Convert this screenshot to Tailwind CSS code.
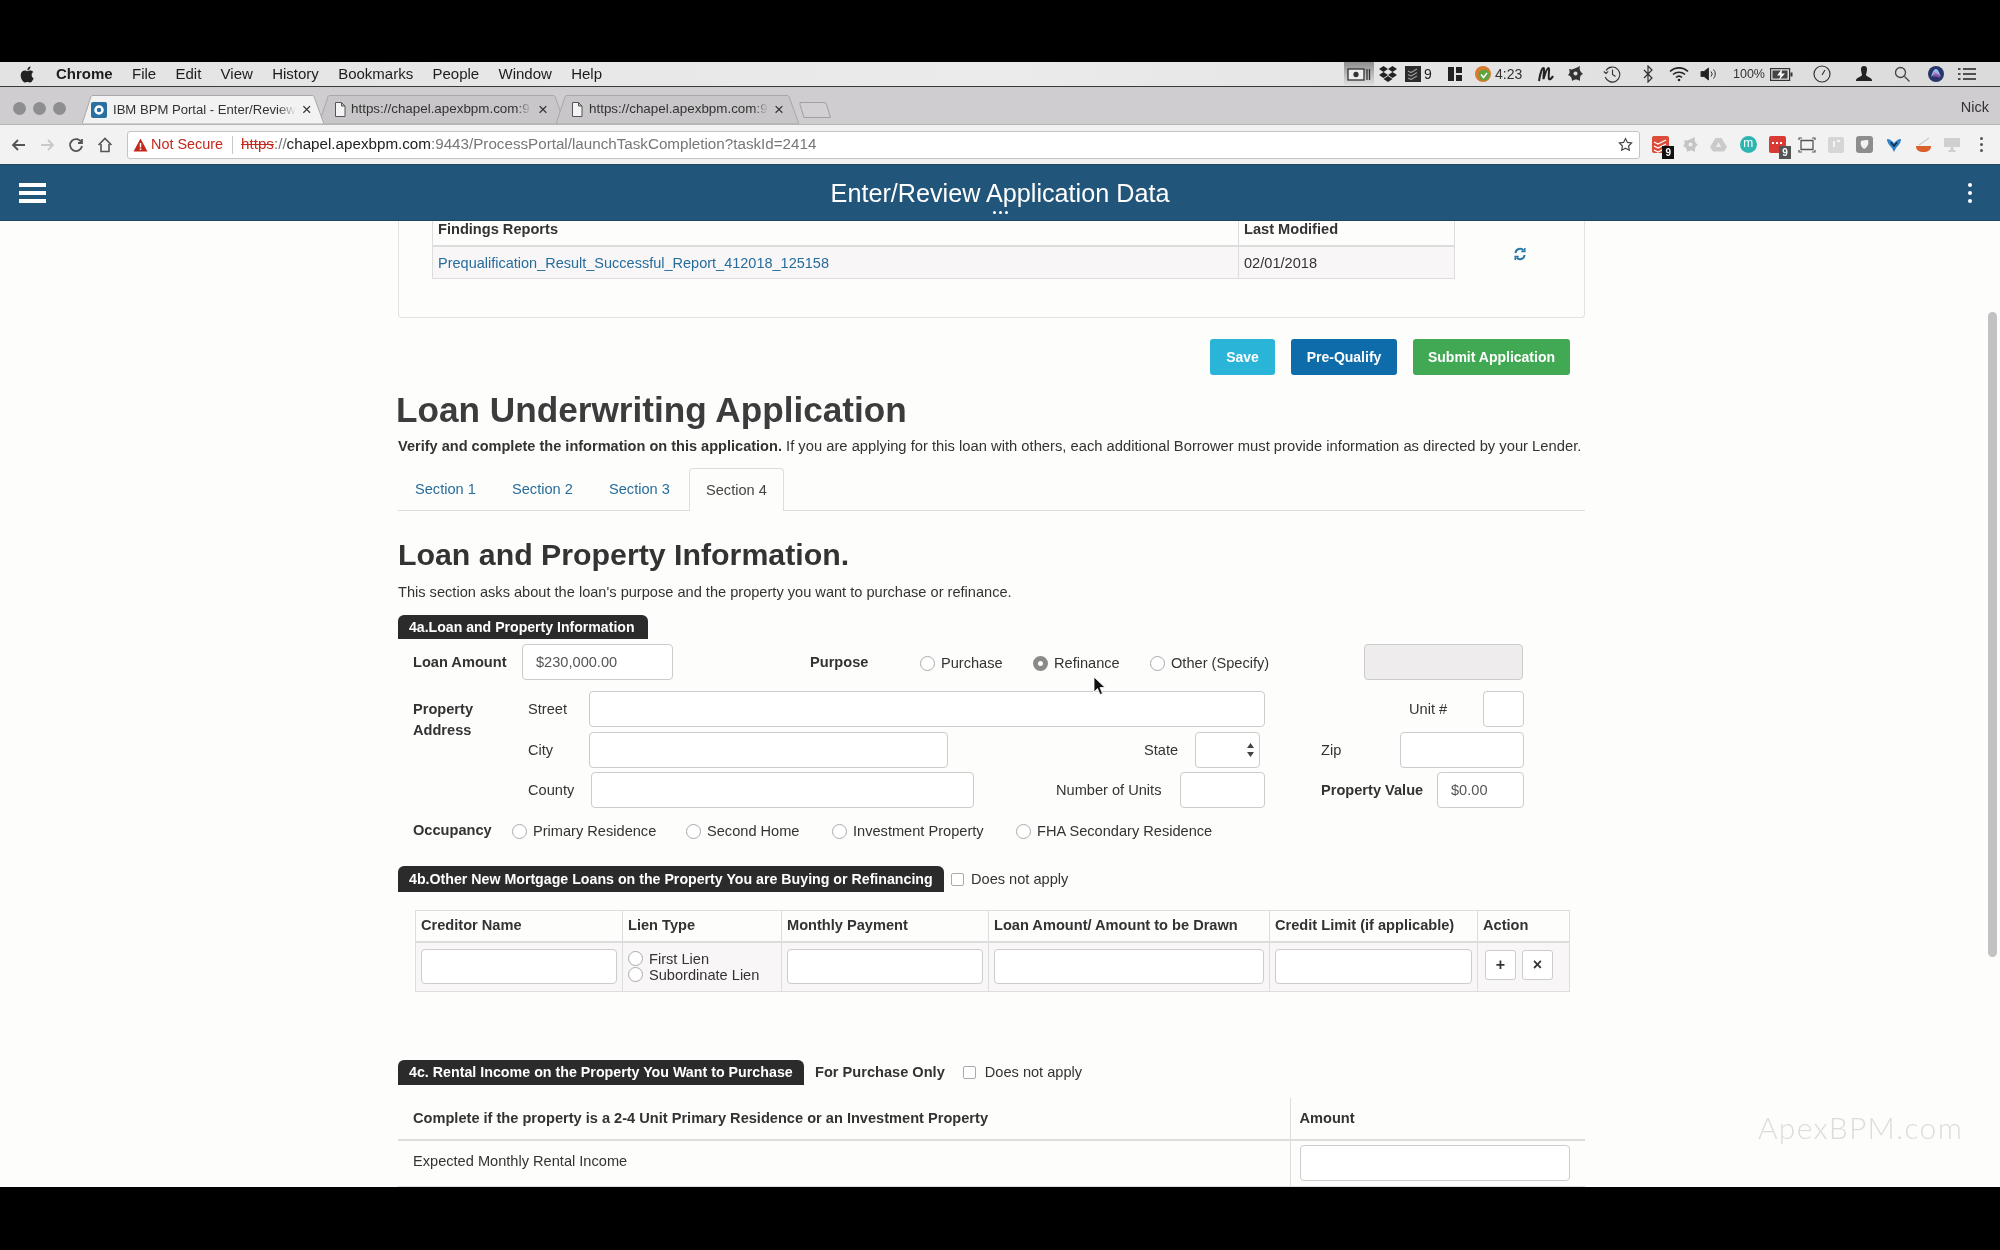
<!DOCTYPE html>
<html lang="en">
<head>
    <meta charset="UTF-8">
    <title>IBM BPM Portal - Enter/Review Application Data</title>
    <script src="https://cdn.jsdelivr.net/npm/@tailwindcss/browser@4"></script>
</head>
<body class="bg-black">
<div class="w-[2000px] h-[1250px] overflow-hidden bg-black flex flex-col font-['Liberation_Sans',sans-serif] text-[14.6px] text-[#333] blur-[0.5px]">
    <div class="h-[62px] shrink-0"></div>

    <!-- macOS menu bar -->
    <div class="h-[25px] shrink-0 flex items-center pl-[20px] pr-[24px] bg-gradient-to-r from-[#e4e3e3] via-[#ecebeb] to-[#dcdbdb] border-b border-[#3a3a3a] text-[#1c1c1c] text-[15px]">
        <svg class="w-[14px] h-[17px] mr-[22px]" viewBox="0 0 14 17" fill="#222"><path d="M11.6 9c0-2 1.6-2.9 1.7-3-1-1.3-2.4-1.500-2.900-1.500-1.200-.1-2.400.7-3 .7-.6 0-1.600-.7-2.600-.7C3.400 4.500 2.100 5.300 1.400 6.500c-1.400 2.400-.4 6 1 8 .7 1 1.500 2.100 2.500 2 1-.1 1.400-.6 2.600-.6s1.500.6 2.600.6c1.100 0 1.800-1 2.400-2 .8-1.100 1.100-2.200 1.100-2.300-.1 0-2-.8-2-3.200zM9.700 3.100c.5-.7.900-1.600.8-2.500-.8 0-1.700.5-2.300 1.200-.5.6-.9 1.500-.8 2.400.9.100 1.800-.4 2.300-1.100z"/></svg>
        <div class="flex gap-[19.300px]">
            <span class="font-bold">Chrome</span>
            <span>File</span><span>Edit</span><span>View</span><span>History</span><span>Bookmarks</span><span>People</span><span>Window</span><span>Help</span>
        </div>
        <!-- status icons -->
        <div class="ml-auto flex items-center h-full text-[14px]">
            <div class="w-[30px] h-full bg-gradient-to-b from-[#8f8f8f] to-[#e4e3e3] flex items-center justify-center">
                <svg class="w-[24px] h-[15px]" viewBox="0 0 24 15" fill="none" stroke="#333" stroke-width="1.300"><rect x="1" y="2" width="16" height="11" fill="#eee"/><circle cx="9" cy="7.500" r="2" fill="#333"/><path d="M20 2v11M22.500 2v11"/></svg>
            </div>
            <svg class="ml-[4px] w-[20px] h-[18px]" viewBox="0 0 20 18" fill="#222"><path d="m5.500 1 4.500 3-4.500 3L1 4zM14.500 1 19 4l-4.500 3L10 4zM5.500 7l4.500 3-4.500 3L1 10zM14.500 7l4.500 3-4.500 3L10 10zM10 11l4.500 3-4.500 3-4.500-3z"/></svg>
            <svg class="ml-[6px] w-[18px] h-[18px]" viewBox="0 0 18 18"><rect x="1" y="1" width="16" height="16" fill="#2b2b2b"/><path d="m4 6 3 1.500L13 4M4 9.500l3 1.500 6-3.500M4 13l3 1.500 6-3.500" stroke="#999" fill="none" stroke-width="1.200"/></svg>
            <span class="ml-[2px] w-[11px]">9</span>
            <svg class="ml-[11px] w-[18px] h-[16px]" viewBox="0 0 18 16" fill="#222"><rect x="2" y="1" width="6" height="14"/><rect x="10" y="1" width="6" height="6"/><rect x="10" y="9" width="6" height="6"/></svg>
            <svg class="ml-[10px] w-[18px] h-[18px]" viewBox="0 0 18 18"><circle cx="9" cy="9" r="8" fill="#d9782e"/><circle cx="10" cy="10" r="5.500" fill="#5aa63c"/><path d="m7 9.500 2.500 3L13 8" stroke="#fff" fill="none" stroke-width="1.600"/></svg>
            <span class="ml-[3px] w-[30px] text-[#333]">4:23</span>
            <svg class="ml-[12px] w-[18px] h-[18px]" viewBox="0 0 18 18" fill="none" stroke="#222" stroke-width="2"><path d="M2 16C3 9 5 3 6.500 3S6 11 6.500 14C8 9 10 3 11.500 3S11 11 12 14c1 1 3-1 4-3"/></svg>
            <svg class="ml-[11px] w-[18px] h-[18px]" viewBox="0 0 18 18"><path d="M3 4c3 1 5 0 11-3-1 3 0 6 3 8-3 1-3 3-3 7-3-2-5-2-8 0 0-3-1-5-4-6 2-2 2-3 1-6z" fill="#333"/><circle cx="9.500" cy="8.500" r="2" fill="#ddd"/></svg>
            <svg class="ml-[19px] w-[18px] h-[18px]" viewBox="0 0 18 18" fill="none" stroke="#333" stroke-width="1.100"><path d="M3 5.500A7.500 7.500 0 1 1 2.200 12M9.500 4.500V9.500l3 2M.8 6.500 3 8.500l2.200-2.200"/></svg>
            <svg class="ml-[21px] w-[12px] h-[18px]" viewBox="0 0 12 18" fill="none" stroke="#333" stroke-width="1.200"><path d="m2 5 8 8-4 4V1l4 4-8 8"/></svg>
            <svg class="ml-[15px] w-[20px] h-[16px]" viewBox="0 0 20 16" fill="none" stroke="#222" stroke-width="1.600"><path d="M1 5.500a13 13 0 0 1 18 0M4 8.500a9 9 0 0 1 12 0M7 11.500a4.500 4.500 0 0 1 6 0"/><circle cx="10" cy="14" r="1.300" fill="#222" stroke="none"/></svg>
            <svg class="ml-[11px] w-[18px] h-[14px]" viewBox="0 0 18 14" fill="none" stroke="#333"><path d="M1 4.500h3L8.500 1v12L4 9.500H1z" fill="#222"/><path d="M11 4.500a3.500 3.500 0 0 1 0 5M13.500 2.500a6.500 6.500 0 0 1 0 9"/></svg>
            <span class="ml-[15px] w-[31px] text-[12.500px] text-[#333] whitespace-nowrap">100%</span>
            <svg class="ml-[6px] w-[23px] h-[13px]" viewBox="0 0 23 13"><rect x=".6" y=".6" width="19" height="11.800" fill="#ddd" stroke="#333" stroke-width="1.200"/><rect x="2.500" y="2.500" width="15" height="8" fill="#444"/><path d="M12 1 7 7.500h3.500L9 12l6-6.500h-3.500z" fill="#fff"/><rect x="20.500" y="4.500" width="2" height="4" fill="#333"/></svg>
            <svg class="ml-[20px] w-[18px] h-[18px]" viewBox="0 0 18 18" fill="none" stroke="#333" stroke-width="1.200"><circle cx="9" cy="9" r="8"/><path d="M9 10 12 5"/></svg>
            <svg class="ml-[24px] w-[18px] h-[18px]" viewBox="0 0 18 18" fill="#222"><path d="M6 4a3 3 0 0 1 6 0c0 3-1 5-1 6 1 2 5 2 6 5v1H1v-1c1-3 5-3 6-5 0-1-1-3-1-6z"/></svg>
            <svg class="ml-[21px] w-[16px] h-[16px]" viewBox="0 0 16 16" fill="none" stroke="#444" stroke-width="1.300"><circle cx="6.500" cy="6.500" r="5"/><path d="m10.500 10.500 5 5"/></svg>
            <svg class="ml-[18px] w-[16px] h-[16px]" viewBox="0 0 16 16"><circle cx="8" cy="8" r="8" fill="#27356b"/><path d="M3 11c2-6 3-8 5-8s3 3 5 8c-2-2-3-3-5-3s-3 1-5 3z" fill="#8fc0ea"/><path d="M6 6c3 0 5 2 6 6-2-1-5-2-7-1z" fill="#c060c0" opacity=".7"/></svg>
            <svg class="ml-[14px] w-[18px] h-[14px]" viewBox="0 0 18 14" fill="none" stroke="#222" stroke-width="1.600"><path d="M5 2h13M5 7h13M5 12h13M0 2h2.500M0 7h2.500M0 12h2.500"/></svg>
        </div>
    </div>

    <!-- tab strip -->
    <div class="h-[37px] shrink-0 bg-[#cfcdcf] flex items-end">
        <div class="flex gap-[7px] self-center mt-[5px] pl-[13px] pr-[16px]">
            <span class="w-[13px] h-[13px] rounded-full bg-[#8e8e90]"></span>
            <span class="w-[13px] h-[13px] rounded-full bg-[#8e8e90]"></span>
            <span class="w-[13px] h-[13px] rounded-full bg-[#8e8e90]"></span>
        </div>
        <div class="relative z-10 w-[242px] h-[29px] flex items-center pl-[9px] pr-[14px] gap-[6px] text-[13.100px]">
            <svg class="absolute inset-0 w-full h-full" viewBox="0 0 242 29" preserveAspectRatio="none"><path d="M0 29 9 1.500q.5-1 2-1h219q1.500 0 2 1l10 27.500z" fill="#f2f2f2" stroke="#a8a8a8"/></svg>
            <svg class="relative w-[16px] h-[16px] shrink-0" viewBox="0 0 16 16"><rect width="16" height="16" rx="2" fill="#2a6f9f"/><circle cx="8" cy="8" r="3.500" fill="none" stroke="#fff" stroke-width="2.500"/></svg>
            <span class="relative w-[184px] whitespace-nowrap [mask-image:linear-gradient(to_right,black_90%,transparent)]">IBM BPM Portal - Enter/Review</span>
            <span class="relative ml-auto text-[17px] leading-none">×</span>
        </div>
        <div class="relative -ml-[5px] w-[246px] h-[29px] flex items-center pl-[15px] pr-[17px] gap-[5px] text-[13.400px]">
            <svg class="absolute inset-0 w-full h-full" viewBox="0 0 246 29" preserveAspectRatio="none"><path d="M0 29 9 1.500q.5-1 2-1h223q1.500 0 2 1l10 27.500z" fill="#c8c6c8" stroke="#a8a8a8"/></svg>
            <svg class="relative w-[12px] h-[15px] shrink-0" viewBox="0 0 12 15" fill="#f4f4f4" stroke="#555"><path d="M1.500.5h6l3.500 3.500v10.500h-9.500zM7.500.5v3.500h3.500"/></svg>
            <span class="relative w-[180px] whitespace-nowrap [mask-image:linear-gradient(to_right,black_92%,transparent)]">https://chapel.apexbpm.com:9</span>
            <span class="relative ml-auto text-[17px] leading-none">×</span>
        </div>
        <div class="relative -ml-[9px] w-[243px] h-[29px] flex items-center pl-[15px] pr-[15px] gap-[6px] text-[13.400px]">
            <svg class="absolute inset-0 w-full h-full" viewBox="0 0 243 29" preserveAspectRatio="none"><path d="M0 29 9 1.500q.5-1 2-1h220q1.500 0 2 1l10 27.500z" fill="#c8c6c8" stroke="#a8a8a8"/></svg>
            <svg class="relative w-[12px] h-[15px] shrink-0" viewBox="0 0 12 15" fill="#f4f4f4" stroke="#555"><path d="M1.500.5h6l3.500 3.500v10.500h-9.500zM7.500.5v3.500h3.500"/></svg>
            <span class="relative w-[180px] whitespace-nowrap [mask-image:linear-gradient(to_right,black_92%,transparent)]">https://chapel.apexbpm.com:9</span>
            <span class="relative ml-auto text-[17px] leading-none">×</span>
        </div>
        <svg class="w-[32px] h-[16px] mb-[6px]" viewBox="0 0 32 16"><path d="M1 .5h24q2 0 2.500 2l4 13H5l-4-13z" fill="#d2d0d2" stroke="#a0a0a0"/></svg>
        <span class="ml-auto self-center mt-[4px] pr-[11px] text-[14.500px]">Nick</span>
    </div>

    <!-- toolbar -->
    <div class="h-[40px] shrink-0 bg-[#f2f2f2] flex items-center pl-[10px] border-t border-[#b5b5b5]">
        <svg class="w-[18px] h-[18px]" viewBox="0 0 18 18" fill="none" stroke="#555" stroke-width="1.800"><path d="M15 9H3M8 4 3 9l5 5"/></svg>
        <svg class="w-[18px] h-[18px] ml-[10px]" viewBox="0 0 18 18" fill="none" stroke="#c8c8c8" stroke-width="1.800"><path d="M3 9h12M10 4l5 5-5 5"/></svg>
        <svg class="w-[18px] h-[18px] ml-[11px]" viewBox="0 0 18 18" fill="none" stroke="#555" stroke-width="1.800"><path d="M14.500 6.500A6 6 0 1 0 15 10M15 3v4h-4"/></svg>
        <svg class="w-[18px] h-[18px] ml-[11px]" viewBox="0 0 18 18" fill="none" stroke="#555" stroke-width="1.600"><path d="M2.500 9 9 2.500 15.500 9M5 8v7.500h8V8"/></svg>
        <div class="w-[1513px] h-[28px] ml-[13px] bg-white border border-[#c4c4c4] rounded-[3px] flex items-center pl-[5px] text-[15.200px] whitespace-nowrap">
            <svg class="w-[15px] h-[14px] shrink-0" viewBox="0 0 15 14"><path d="M7.500.5 14.500 13.500H.5z" fill="#c4281c"/><path d="M7.500 5v4.500M7.500 10.500v1.500" stroke="#fff" stroke-width="1.500"/></svg>
            <span class="text-[#c4281c] ml-[3px] text-[14.400px]">Not Secure</span>
            <span class="w-px h-[18px] bg-[#c8c8c8] ml-[9px] mr-[8px]"></span>
            <span class="text-[#c4281c] line-through">https</span><span class="text-[#777]">://</span><span class="text-[#222]">chapel.apexbpm.com</span><span class="text-[#777]">:9443/ProcessPortal/launchTaskCompletion?taskId=2414</span>
            <svg class="w-[15px] h-[15px] ml-auto mr-[6px]" viewBox="0 0 15 15" fill="none" stroke="#444" stroke-width="1.200"><path d="m7.500 1.500 1.900 3.900 4.200.6-3 3 .7 4.200-3.800-2-3.800 2 .7-4.200-3-3 4.200-.6z"/></svg>
        </div>
        <!-- extensions -->
        <div class="ml-[6px] flex items-center">
            <div class="relative w-[29.200px] h-[24px] flex items-center justify-center">
                <svg class="w-[17px] h-[17px]" viewBox="0 0 17 17"><rect width="17" height="17" rx="2" fill="#dd4b39"/><path d="m2 6 4 2 8-4M2 10l4 2 8-4M2 14l4 2 8-4" stroke="#fff" fill="none" stroke-width="1.300"/></svg>
                <span class="absolute right-[1px] bottom-[-2px] w-[12px] h-[13px] bg-[#111] text-white text-[10px] font-bold leading-[13px] text-center">9</span>
            </div>
            <div class="w-[29.200px] flex justify-center">
                <svg class="w-[18px] h-[18px]" viewBox="0 0 18 18"><path d="M3 4c3 1 5 0 11-3-1 3 0 6 3 8-3 1-3 3-3 7-3-2-5-2-8 0 0-3-1-5-4-6 2-2 2-3 1-6z" fill="#c4c4c4"/><circle cx="9.500" cy="8.500" r="2" fill="#eee"/></svg>
            </div>
            <div class="w-[29.200px] flex justify-center">
                <svg class="w-[17px] h-[15px]" viewBox="0 0 17 15"><path d="M5.500 1h6l5.500 9-3 4.500H3L0 10z" fill="#cacaca"/><path d="M8.500 5 11 10H6z" fill="#eee"/></svg>
            </div>
            <div class="w-[29.200px] flex justify-center">
                <span class="w-[17px] h-[17px] rounded-full bg-[#2eb5b0] text-white text-[12px] leading-[15px] text-center">m</span>
            </div>
            <div class="relative w-[29.200px] h-[24px] flex items-center justify-center">
                <svg class="w-[17px] h-[17px]" viewBox="0 0 17 17"><rect width="17" height="17" rx="2" fill="#d93a34"/><path d="M3 7h2M7 7h2M11 7h2" stroke="#fff" stroke-width="2"/></svg>
                <span class="absolute right-[1px] bottom-[-2px] w-[12px] h-[13px] bg-[#555] text-white text-[10px] font-bold leading-[13px] text-center">9</span>
            </div>
            <div class="w-[29.200px] flex justify-center">
                <svg class="w-[18px] h-[16px]" viewBox="0 0 18 16" fill="none" stroke="#555"><path d="M3 3.500h12v9H3z" stroke-width="1.300"/><path d="M1 3V1h3M14 1h3v2M1 13v2h3M14 15h3v-2" stroke-width="1.200"/></svg>
            </div>
            <div class="w-[29.200px] flex justify-center">
                <svg class="w-[16px] h-[16px]" viewBox="0 0 16 16"><rect width="16" height="16" rx="2" fill="#d6d6d6"/><path d="M6 4v6M9 4h3" stroke="#f4f4f4" stroke-width="2"/></svg>
            </div>
            <div class="w-[29.200px] flex justify-center">
                <svg class="w-[17px] h-[17px]" viewBox="0 0 17 17"><rect width="17" height="17" rx="3" fill="#8d8d8d"/><path d="M5 5c2-1 5-1 7-1 1 3 0 7-4 9-3-2-4-5-3-8z" fill="#f2f2f2"/></svg>
            </div>
            <div class="w-[29.200px] flex justify-center">
                <svg class="w-[16px] h-[16px]" viewBox="0 0 16 16"><path d="M1 2c3 0 5 2 7 4 2-2 4-4 7-4 0 4-3 7-5 9l-2 4-2-4C4 9 1 6 1 2z" fill="#2f7fc4"/><path d="M5 5.500 8 9l3-3.500" stroke="#123" fill="none" stroke-width="1.200"/></svg>
            </div>
            <div class="w-[29.200px] flex justify-center">
                <svg class="w-[17px] h-[16px]" viewBox="0 0 17 16"><path d="M4 8 14 1" stroke="#ccc" stroke-width="1.500"/><path d="M1 9h15c0 4-3 6-7.500 6S1 13 1 9z" fill="#d9602a"/></svg>
            </div>
            <div class="w-[29.200px] flex justify-center">
                <svg class="w-[16px] h-[16px]" viewBox="0 0 16 16" fill="#cfcfcf"><rect y="1" width="16" height="9"/><path d="M6.500 10h3v3h2v2h-7v-2h2z"/></svg>
            </div>
            <div class="w-[29.200px] flex flex-col items-center gap-[3px]">
                <span class="w-[3px] h-[3px] rounded-full bg-[#555]"></span><span class="w-[3px] h-[3px] rounded-full bg-[#555]"></span><span class="w-[3px] h-[3px] rounded-full bg-[#555]"></span>
            </div>
        </div>
    </div>

    <!-- app header -->
    <header class="h-[57px] shrink-0 bg-[#22557a] flex items-center justify-between pl-[19px] pr-[19px] relative border-y border-y-[#1c4664]">
        <div class="flex flex-col gap-[4px] w-[27px]">
            <span class="h-[4px] bg-white"></span><span class="h-[4px] bg-white"></span><span class="h-[4px] bg-white"></span>
        </div>
        <h1 class="pt-[2px] text-[25.200px] text-white">Enter/Review Application Data</h1>
        <div class="flex flex-col items-end gap-[4px] w-[27px] pr-[9px]">
            <span class="w-[4px] h-[4px] bg-white rounded-full"></span><span class="w-[4px] h-[4px] bg-white rounded-full"></span><span class="w-[4px] h-[4px] bg-white rounded-full"></span>
        </div>
        <div class="absolute left-[993px] bottom-[6px] flex gap-[3px]">
            <span class="w-[3px] h-[3px] rounded-full bg-white"></span><span class="w-[3px] h-[3px] rounded-full bg-white"></span><span class="w-[3px] h-[3px] rounded-full bg-white"></span>
        </div>
    </header>

    <!-- page content -->
    <main class="h-[966px] shrink-0 bg-[#fdfdfc] overflow-hidden relative">
        <div class="ml-[398px] w-[1187px]">
            <!-- findings card -->
            <div class="-mt-[8px] h-[105px] border-x border-b border-[#e2e2e2] rounded-b-[4px] pl-[33px] flex">
                <table class="w-[1023px] h-[65px] table-fixed border-collapse">
                    <tr class="h-[33px]">
                        <th class="w-[806px] pt-[2px] border-x border-[#ddd] border-b-2 text-left font-bold px-[5px]">Findings Reports</th>
                        <th class="pt-[2px] border-x border-[#ddd] border-b-2 text-left font-bold px-[5px]">Last Modified</th>
                    </tr>
                    <tr class="h-[32px] bg-[#f9f6f8]">
                        <td class="border border-[#ddd] pt-[3px] px-[5px] text-[14.500px] text-[#266d9c]">Prequalification_Result_Successful_Report_412018_125158</td>
                        <td class="border border-[#ddd] pt-[3px] px-[5px]">02/01/2018</td>
                    </tr>
                </table>
                <svg class="w-[12px] h-[14px] ml-[59px] mt-[34px]" viewBox="0 0 12 14" fill="none" stroke="#2a7aa8" stroke-width="2"><path d="M1.500 6a4.500 4.500 0 0 1 8-2.500M10.500 8a4.500 4.500 0 0 1-8 2.500"/><path d="M10.800 1v3.500H7.300M1.200 13V9.500h3.500" stroke-width="1.500"/></svg>
            </div>

            <!-- action buttons -->
            <div class="mt-[21px] pr-[15px] flex justify-end gap-[16px] text-white">
                <button class="w-[65px] h-[36px] rounded-[3px] bg-[#29b4d8] font-bold text-[14px]">Save</button>
                <button class="w-[106px] h-[36px] rounded-[3px] bg-[#0f6cab] font-bold text-[14px]">Pre-Qualify</button>
                <button class="w-[157px] h-[36px] rounded-[3px] bg-[#41a853] font-bold text-[14px]">Submit Application</button>
            </div>

            <h1 class="mt-[15px] -ml-[2px] text-[35.200px] leading-[40px] font-bold text-[#3c3c3c]">Loan Underwriting Application</h1>
            <p class="mt-[6px] leading-[20px] text-[14.750px] whitespace-nowrap"><b class="text-[14.550px]">Verify and complete the information on this application.</b> If you are applying for this loan with others, each additional Borrower must provide information as directed by your Lender.</p>

            <!-- section tabs -->
            <div class="mt-[12px] h-[43px] flex border-b border-[#ddd] text-[#266d9c]">
                <a class="w-[97px] pl-[17px] leading-[42px]">Section 1</a>
                <a class="w-[97px] pl-[17px] leading-[42px]">Section 2</a>
                <a class="w-[97px] pl-[17px] leading-[42px]">Section 3</a>
                <a class="w-[95px] h-[43px] pl-[16px] leading-[42px] text-[#444] bg-[#fdfdfc] border-x border-t border-[#ddd] rounded-t-[4px]">Section 4</a>
            </div>

            <h2 class="mt-[26px] text-[30.300px] leading-[36px] font-bold text-[#333]">Loan and Property Information.</h2>
            <p class="mt-[9px] leading-[20px]">This section asks about the loan's purpose and the property you want to purchase or refinance.</p>

            <!-- 4a -->
            <div class="mt-[13px] w-[250px] h-[24px] leading-[24px] pl-[11px] bg-[#2b2b2c] text-white font-bold text-[14.100px] rounded-t-[6px]">4a.Loan and Property Information</div>

            <div class="mt-[5px] pl-[15px]">
                <div class="flex items-center h-[36px]">
                    <b class="w-[109px] pt-[2px]">Loan Amount</b>
                    <input class="w-[151px] h-[36px] px-[13px] bg-white border border-[#ccc] rounded-[4px] text-[#555]" value="$230,000.00">
                    <b class="ml-[137px] w-[110px] pt-[1px]">Purpose</b>
                    <label class="w-[113px] pt-[3px] flex items-center gap-[6px]"><input type="radio" class="appearance-none w-[15px] h-[15px] rounded-full border border-[#aaa] bg-white">Purchase</label>
                    <label class="w-[117px] pt-[3px] flex items-center gap-[6px]"><input type="radio" checked class="appearance-none w-[15px] h-[15px] rounded-full border-[5px] border-[#8a8a8a] bg-white">Refinance</label>
                    <label class="w-[214px] pt-[3px] flex items-center gap-[6px]"><input type="radio" class="appearance-none w-[15px] h-[15px] rounded-full border border-[#aaa] bg-white">Other (Specify)</label>
                    <input disabled class="w-[159px] h-[36px] bg-[#eeeced] border border-[#ccc] rounded-[4px]">
                </div>

                <div class="flex mt-[11px]">
                    <b class="w-[115px] pt-[8px] leading-[21px]">Property<br>Address</b>
                    <div class="flex flex-col">
                        <div class="flex items-center h-[36px]">
                            <span class="w-[61px] pt-[2px]">Street</span>
                            <input class="w-[676px] h-[36px] bg-white border border-[#ccc] rounded-[4px]">
                            <span class="ml-[144px] w-[74px] pt-[2px]">Unit #</span>
                            <input class="w-[41px] h-[36px] bg-white border border-[#ccc] rounded-[4px]">
                        </div>
                        <div class="flex items-center h-[36px] mt-[5px]">
                            <span class="w-[61px] pt-[2px]">City</span>
                            <input class="w-[359px] h-[36px] bg-white border border-[#ccc] rounded-[4px]">
                            <span class="ml-[196px] w-[51px] pt-[2px]">State</span>
                            <div class="relative w-[65px] h-[36px] bg-white border border-[#ccc] rounded-[4px]">
                                <svg class="absolute right-[5px] top-[10px] w-[7px] h-[14px]" viewBox="0 0 7 14" fill="#444"><path d="M3.500 0 7 5H0zM3.500 14 0 9h7z"/></svg>
                            </div>
                            <span class="ml-[61px] w-[79px] pt-[2px]">Zip</span>
                            <input class="w-[124px] h-[36px] bg-white border border-[#ccc] rounded-[4px]">
                        </div>
                        <div class="flex items-center h-[36px] mt-[4px]">
                            <span class="w-[63px] pt-[2px]">County</span>
                            <input class="w-[383px] h-[36px] bg-white border border-[#ccc] rounded-[4px]">
                            <span class="ml-[82px] w-[124px] pt-[2px]">Number of Units</span>
                            <input class="w-[85px] h-[36px] bg-white border border-[#ccc] rounded-[4px]">
                            <b class="ml-[56px] w-[116px] pt-[2px]">Property Value</b>
                            <input class="w-[87px] h-[36px] px-[13px] bg-white border border-[#ccc] rounded-[4px] text-[#555]" value="$0.00">
                        </div>
                    </div>
                </div>

                <div class="flex items-center h-[20px] mt-[13px]">
                    <b class="w-[99px]">Occupancy</b>
                    <label class="w-[174px] pt-[1px] flex items-center gap-[6px]"><input type="radio" class="appearance-none w-[15px] h-[15px] rounded-full border border-[#aaa] bg-white">Primary Residence</label>
                    <label class="w-[146px] pt-[1px] flex items-center gap-[6px]"><input type="radio" class="appearance-none w-[15px] h-[15px] rounded-full border border-[#aaa] bg-white">Second Home</label>
                    <label class="w-[184px] pt-[1px] flex items-center gap-[6px]"><input type="radio" class="appearance-none w-[15px] h-[15px] rounded-full border border-[#aaa] bg-white">Investment Property</label>
                    <label class="pt-[1px] flex items-center gap-[6px]"><input type="radio" class="appearance-none w-[15px] h-[15px] rounded-full border border-[#aaa] bg-white">FHA Secondary Residence</label>
                </div>
            </div>

            <!-- 4b -->
            <div class="mt-[25px] flex items-center">
                <div class="w-[546px] h-[26px] leading-[26px] pl-[11px] bg-[#2b2b2c] text-white font-bold text-[14.200px] rounded-t-[6px]">4b.Other New Mortgage Loans on the Property You are Buying or Refinancing</div>
                <label class="ml-[7px] pt-[1px] flex items-center gap-[7px]"><input type="checkbox" class="appearance-none w-[13px] h-[13px] rounded-[2px] border border-[#aaa] bg-white">Does not apply</label>
            </div>
            <table class="mt-[18px] ml-[17px] w-[1155px] table-fixed border-collapse">
                <tr class="h-[31px] text-left">
                    <th class="w-[207px] border border-b-2 border-[#ddd] px-[5px]">Creditor Name</th>
                    <th class="w-[159px] border border-b-2 border-[#ddd] px-[5px]">Lien Type</th>
                    <th class="w-[207px] border border-b-2 border-[#ddd] px-[5px]">Monthly Payment</th>
                    <th class="w-[281px] border border-b-2 border-[#ddd] px-[5px]">Loan Amount/ Amount to be Drawn</th>
                    <th class="w-[208px] border border-b-2 border-[#ddd] px-[5px]">Credit Limit (if applicable)</th>
                    <th class="border border-b-2 border-[#ddd] px-[5px]">Action</th>
                </tr>
                <tr class="h-[50px] bg-[#f9f6f8]">
                    <td class="border border-[#ddd] px-[5px]"><input class="block w-full h-[35px] bg-white border border-[#ccc] rounded-[4px]"></td>
                    <td class="border border-[#ddd] px-[5px] leading-[16px]">
                        <label class="flex items-center gap-[6px]"><input type="radio" class="appearance-none w-[15px] h-[15px] rounded-full border border-[#aaa] bg-white">First Lien</label>
                        <label class="flex items-center gap-[6px]"><input type="radio" class="appearance-none w-[15px] h-[15px] rounded-full border border-[#aaa] bg-white">Subordinate Lien</label>
                    </td>
                    <td class="border border-[#ddd] px-[5px]"><input class="block w-full h-[35px] bg-white border border-[#ccc] rounded-[4px]"></td>
                    <td class="border border-[#ddd] px-[5px]"><input class="block w-full h-[35px] bg-white border border-[#ccc] rounded-[4px]"></td>
                    <td class="border border-[#ddd] px-[5px]"><input class="block w-full h-[35px] bg-white border border-[#ccc] rounded-[4px]"></td>
                    <td class="border border-[#ddd] pl-[7px]">
                        <div class="flex gap-[6px] mb-[4px]">
                            <button class="w-[31px] h-[30px] bg-white border border-[#ccc] rounded-[3px] font-bold text-[16px] leading-none">+</button>
                            <button class="w-[31px] h-[30px] bg-white border border-[#ccc] rounded-[3px] font-bold text-[16px] leading-none">×</button>
                        </div>
                    </td>
                </tr>
            </table>

            <!-- 4c -->
            <div class="mt-[68px] flex items-center">
                <div class="w-[406px] h-[25px] leading-[25px] pl-[11px] bg-[#2b2b2c] text-white font-bold text-[14.250px] rounded-t-[6px] whitespace-nowrap">4c. Rental Income on the Property You Want to Purchase</div>
                <b class="ml-[11px]">For Purchase Only</b>
                <label class="ml-[18px] flex items-center gap-[9px]"><input type="checkbox" class="appearance-none w-[13px] h-[13px] rounded-[2px] border border-[#aaa] bg-white">Does not apply</label>
            </div>
            <table class="mt-[13px] w-[1187px] table-fixed border-collapse">
                <tr class="h-[42px] border-b-2 border-[#ddd]">
                    <th class="w-[892px] pl-[15px] text-left border-r border-[#ddd]">Complete if the property is a 2-4 Unit Primary Residence or an Investment Property</th>
                    <th class="pl-[9px] text-left">Amount</th>
                </tr>
                <tr class="h-[46px] border-b border-[#ddd]">
                    <td class="pl-[15px] pb-[3px] border-r border-[#ddd]">Expected Monthly Rental Income</td>
                    <td class="pl-[9px] pr-[15px]"><input class="block w-full h-[36px] bg-white border border-[#ccc] rounded-[4px]"></td>
                </tr>
            </table>
        </div>

        <!-- cursor, watermark, scrollbar sit over the page -->
        <svg class="absolute left-[1093px] top-[455px] w-[13px] h-[20px]" viewBox="0 0 13 20"><path d="M1 1v15l3.500-3.500 2.500 6 2.500-1-2.500-6H12z" fill="#111" stroke="#fff" stroke-width=".8"/></svg>
        <div class="absolute left-[1758px] top-[884px] text-[30px] font-['Lato',sans-serif] font-light tracking-[1.300px] text-[#dcdcdc]">ApexBPM.com</div>
        <div class="absolute right-[3px] top-[91px] w-[9px] h-[645px] rounded-full bg-[#c2c2c2]"></div>
    </main>
</div>
</body>
</html>
